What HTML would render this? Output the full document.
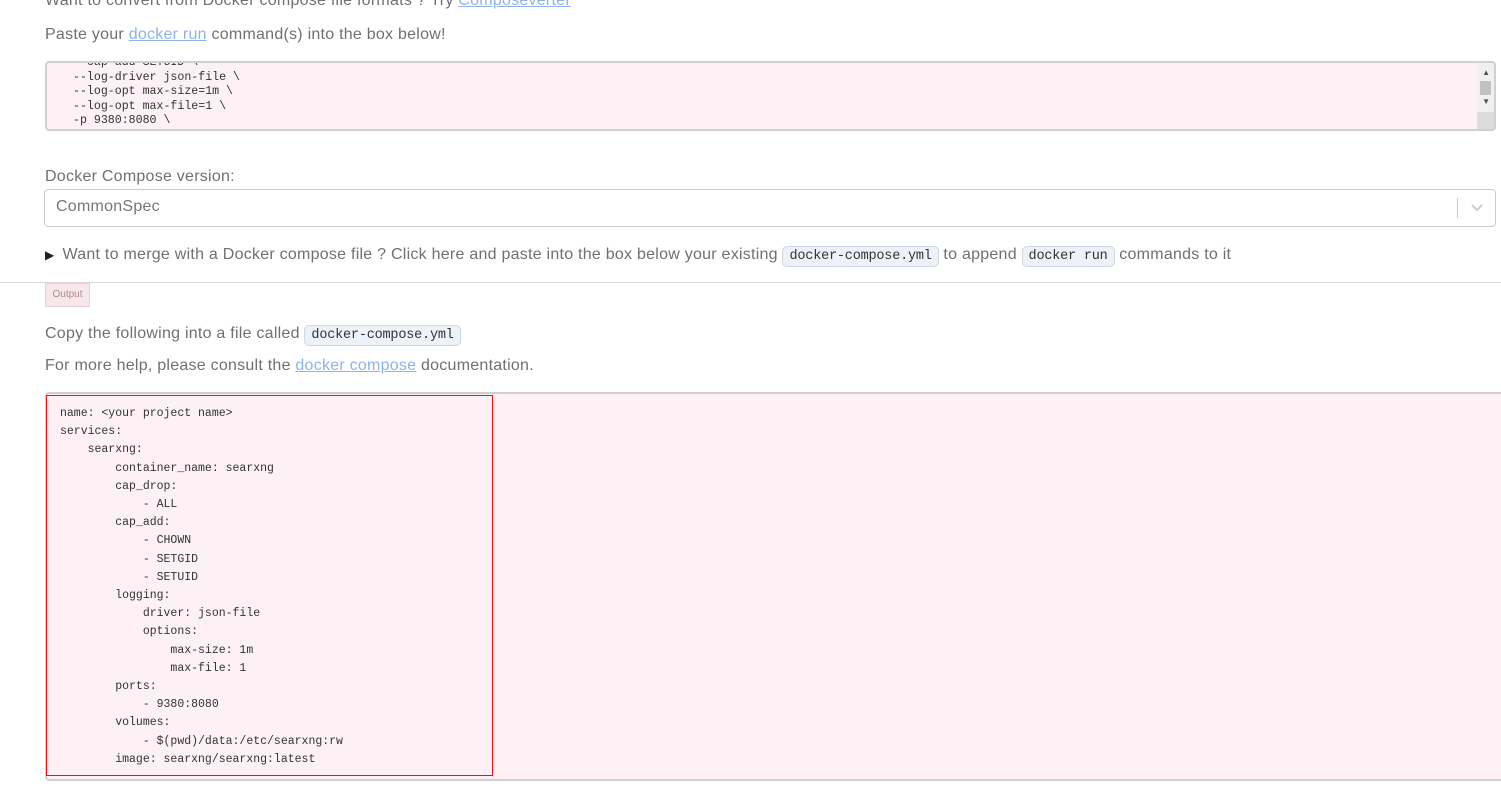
<!DOCTYPE html>
<html><head><meta charset="utf-8"><style>
body{margin:0;width:1501px;height:807px;overflow:hidden;background:#fff;font-family:"Liberation Sans",sans-serif;color:#707070;font-size:16px;position:relative}
.t{position:absolute;left:45px;white-space:nowrap;letter-spacing:0.25px}
a{color:#8fb2ea;text-decoration:underline}
code{font-family:"Liberation Mono",monospace;font-size:13.5px;color:#333;background:#eef2f8;border:1px solid #cfd7e2;border-radius:5px;padding:2px 6px;letter-spacing:-0.2px}
.mono{font-family:"Liberation Mono",monospace;color:#333}
</style></head><body>
<div class="t" style="top:-8px">Want to convert from Docker compose file formats ? Try <a>Composeverter</a></div>
<div class="t" style="top:26px">Paste your <a>docker run</a> command(s) into the box below!</div>
<div style="position:absolute;left:45px;top:61px;width:1447px;height:66px;background:#fdf1f5;border:2px solid #d0d0d0;border-radius:4px;overflow:hidden">
<pre class="mono" style="margin:0;position:absolute;left:26px;top:-7px;font-size:11.6px;line-height:14.6px">  cap-add SETUID \
--log-driver json-file \
--log-opt max-size=1m \
--log-opt max-file=1 \
-p 9380:8080 \</pre>
<div style="position:absolute;right:0;top:0;width:17px;height:66px;background:#f0f0f0"></div>
<div style="position:absolute;right:3px;top:18px;width:11px;height:14px;background:#c1c1c1"></div>
<div style="position:absolute;right:4px;top:5px;font-size:8px;color:#505050">▲</div>
<div style="position:absolute;right:4px;top:34px;font-size:8px;color:#505050">▼</div>
<div style="position:absolute;right:0;top:49px;width:17px;height:17px;background:#dcdcdc"></div>
</div>
<div class="t" style="top:168px">Docker Compose version:</div>
<div style="position:absolute;left:44px;top:189px;width:1450px;height:36px;border:1px solid #ccc;border-radius:4px">
<div style="position:absolute;left:11px;top:8px;color:#777;letter-spacing:0.25px">CommonSpec</div>
<div style="position:absolute;right:37px;top:8px;width:1px;height:20px;background:#ccc"></div>
<svg style="position:absolute;right:11px;top:13px" width="14" height="10"><path d="M2 2 L7 7 L12 2" fill="none" stroke="#ccc" stroke-width="2"/></svg>
</div>
<div class="t" style="top:246px"><span style="color:#222;font-size:12px;margin-right:8px">▶</span>Want to merge with a Docker compose file ? Click here and paste into the box below your existing <code>docker-compose.yml</code> to append <code>docker run</code> commands to it</div>
<div style="position:absolute;left:0;top:282px;width:1501px;height:1px;background:#e0d8dc"></div>
<div style="position:absolute;left:45px;top:283px;width:43px;height:22px;background:#f7e6ea;border:1px solid #e6cfd5;font-size:10px;color:#b08a95;line-height:22px;text-align:center">Output</div>
<div class="t" style="top:325px">Copy the following into a file called <code>docker-compose.yml</code></div>
<div class="t" style="top:357px">For more help, please consult the <a>docker compose</a> documentation.</div>
<div style="position:absolute;left:45px;top:392px;width:1460px;height:385px;background:#fdf1f5;border:2px solid #d0d0d0;border-right:none;border-radius:4px 0 0 4px"></div>
<div style="position:absolute;left:46px;top:395px;width:445px;height:379px;border:1px solid #f01010"></div>
<pre class="mono" style="position:absolute;left:60px;top:405px;margin:0;font-size:11.5px;line-height:18.2px">name: &lt;your project name&gt;
services:
    searxng:
        container_name: searxng
        cap_drop:
            - ALL
        cap_add:
            - CHOWN
            - SETGID
            - SETUID
        logging:
            driver: json-file
            options:
                max-size: 1m
                max-file: 1
        ports:
            - 9380:8080
        volumes:
            - $(pwd)/data:/etc/searxng:rw
        image: searxng/searxng:latest</pre>
</body></html>
